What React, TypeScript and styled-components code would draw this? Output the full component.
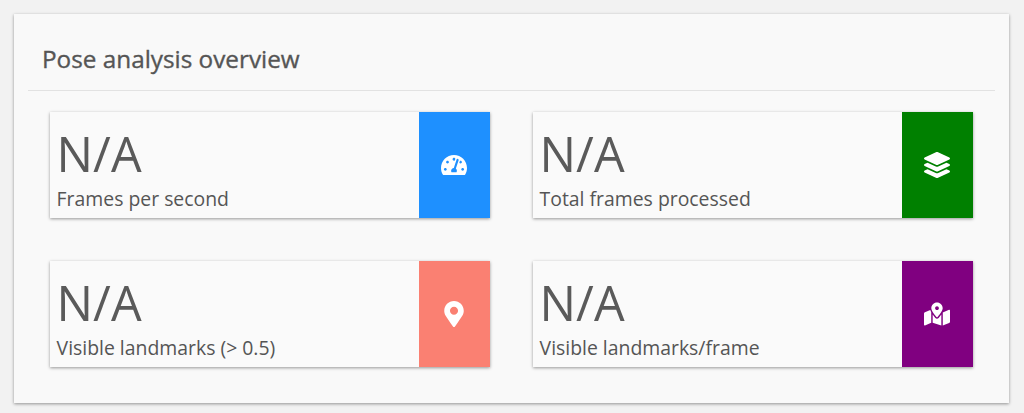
import React from "react";
import styled, { createGlobalStyle } from "styled-components";
import { FaTachometerAlt, FaLayerGroup, FaMapMarkerAlt, FaMapMarkedAlt } from "react-icons/fa";

const GlobalStyle = createGlobalStyle`
    html, body {
        margin: 0;
        padding: 0;
        height: 413px;
        overflow: hidden;
        background-color: #f2f2f2;
        font-family: "Open Sans", "Noto Sans", sans-serif;
    }
`;

const stats = [
    { label: "Frames per second", color: "#1e90ff", icon: <FaTachometerAlt /> },
    { label: "Total frames processed", color: "#008000", icon: <FaLayerGroup /> },
    { label: "Visible landmarks (> 0.5)", color: "#fa8072", icon: <FaMapMarkerAlt /> },
    { label: "Visible landmarks/frame", color: "#800080", icon: <FaMapMarkedAlt /> },
];

const App: React.FC = () => (
    <>
        <GlobalStyle />
        <Page>
            <Panel>
                <Title>Pose analysis overview</Title>
                <Grid>
                    {stats.map((stat) => (
                        <Card key={stat.label}>
                            <CardText>
                                <Value>N/A</Value>
                                <Label>{stat.label}</Label>
                            </CardText>
                            <IconBox $color={stat.color}>{stat.icon}</IconBox>
                        </Card>
                    ))}
                </Grid>
            </Panel>
        </Page>
    </>
);

const Page = styled.div`
    padding: 14px 15px 0 14px;
`;

const Panel = styled.section`
    height: 389px;
    padding: 0 14px;
    box-sizing: border-box;
    background-color: #f9f9f9;
    box-shadow: 0 1px 3px rgba(0, 0, 0, 0.4);
`;

const Title = styled.h2`
    margin: 0;
    padding: 29px 0 0 14px;
    height: 77px;
    box-sizing: border-box;
    font-size: 24.3px;
    font-weight: 400;
    -webkit-text-stroke: 0.35px #555;
    line-height: 32px;
    color: #555;
    border-bottom: 1px solid #e2e2e2;
`;

const Grid = styled.div`
    display: grid;
    grid-template-columns: 440.4px 440.4px;
    column-gap: 42.6px;
    row-gap: 43px;
    padding: 21px 0 0 21.6px;
`;

const Card = styled.div`
    display: flex;
    height: 106px;
    background-color: #fafafa;
    box-shadow: 0 1px 3px rgba(0, 0, 0, 0.4);
`;

const CardText = styled.div`
    flex: 1;
    padding-left: 7px;
    color: #555;
`;

const Value = styled.div`
    font-size: 48.5px;
    line-height: 66px;
    padding-top: 8px;
    color: #5a5a5a;
`;

const Label = styled.div`
    font-size: 19.4px;
    line-height: 26px;
`;

const IconBox = styled.div<{ $color: string }>`
    display: flex;
    align-items: center;
    justify-content: center;
    width: 71px;
    color: #fff;
    background-color: ${(props) => props.$color};

    svg {
        width: auto;
        height: 26px;
    }
`;

export default App;
